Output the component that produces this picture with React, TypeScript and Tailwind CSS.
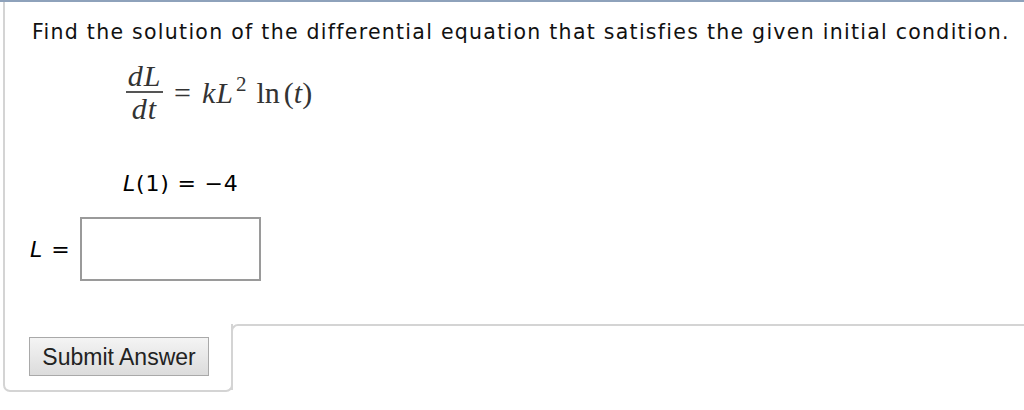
import React from 'react';

const sans = { fontFamily: '"DejaVu Sans", Verdana, sans-serif' };
const serif = { fontFamily: '"Liberation Serif", "Times New Roman", serif' };

const Fraction = () => (
  <span className="inline-flex flex-col items-center">
    <span className="leading-[30px] italic tracking-[1px]">dL</span>
    <span className="h-[2px] w-[37px] bg-[#555]" />
    <span className="leading-[31px] italic tracking-[1px]">dt</span>
  </span>
);

const App = () => {
  return (
    <div className="w-[1024px] h-[410px] bg-white overflow-hidden text-black" style={sans}>
      <div className="h-[2px] bg-[#8ea2bb]" />
      <div className="ml-[3px] border-l-2 border-[#d4d4d4] h-[322px] pt-[18px]">
        <p className="pl-[27px] text-[20.5px] leading-[24px] tracking-[1.27px] text-[#111] whitespace-nowrap">
          Find the solution of the differential equation that satisfies the given initial condition.
        </p>

        {/* equation */}
        <div className="mt-[17px] ml-[121px] flex items-center text-[30px] text-[#333]" style={serif}>
          <Fraction />
          <span className="ml-[11px] whitespace-nowrap leading-[30px] pt-[4px]">
            =
            <span className="italic ml-[11px]">k</span>
            <span className="italic ml-[1px]">L</span>
            <span className="relative -top-[12px] text-[21px] ml-[3px]">2</span>
            <span className="ml-[10px]">ln</span>
            <span className="ml-[4px]">(</span>
            <span className="italic">t</span>
            <span>)</span>
          </span>
        </div>

        <div className="mt-[47px] ml-[118px] text-[22px] leading-[26px] tracking-[0.8px]">
          <span className="italic">L</span>(1) = −4
        </div>

        <div className="mt-[20px] ml-[25px] flex items-center text-[22px] tracking-[1px]">
          <span className="w-[50px]">
            <span className="italic">L</span> =
          </span>
          <input
            type="text"
            className="w-[181px] h-[64px] border-2 border-[#9a9a9a] bg-white outline-none"
          />
        </div>
      </div>

      <div className="flex h-[68px]">
        <div className="ml-[3px] w-[230px] border-l-2 border-b-2 border-r-2 border-[#d4d4d4] rounded-b-[7px] pt-[13px] pl-[24px]">
          <button
            className="w-[180px] h-[39px] border border-[#a9a9a9] bg-gradient-to-b from-[#f4f4f4] to-[#dcdcdc] text-[23px] text-[#222] leading-[36px]"
            style={{ fontFamily: '"Liberation Sans", Arial, sans-serif' }}
          >
            Submit Answer
          </button>
        </div>
        <div className="-ml-[2px] flex-1 h-[66px] border-l-2 border-t-2 border-[#d4d4d4] rounded-tl-[7px]" />
      </div>
    </div>
  );
};

export default App;
